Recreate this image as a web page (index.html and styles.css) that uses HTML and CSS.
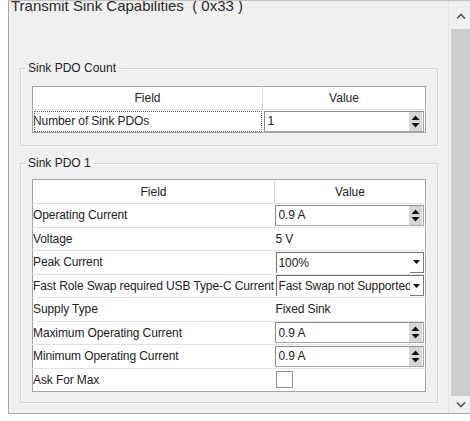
FILE: index.html
```html
<!DOCTYPE html>
<html>
<head>
<meta charset="utf-8">
<link rel="stylesheet" href="styles.css">
</head>
<body>
<div class="frame">
  <div class="viewport">
    <div class="title">Transmit Sink Capabilities&nbsp; ( 0x33 )</div>

    <fieldset class="group g1">
      <legend>Sink PDO Count</legend>
      <table class="grid t1">
        <colgroup><col class="c1a"><col></colgroup>
        <tr><th class="hf">Field</th><th>Value</th></tr>
        <tr>
          <td class="focus">Number of Sink PDOs</td>
          <td class="val"><div class="spin"><span class="txt">1</span><span class="spinbtn"><svg width="9" height="15" viewBox="0 0 9 15"><polygon points="0.5,6 8.5,6 4.5,1.5" fill="#111"/><polygon points="0.5,9 8.5,9 4.5,13.5" fill="#111"/></svg></span></div></td>
        </tr>
      </table>
    </fieldset>

    <fieldset class="group g2">
      <legend>Sink PDO 1</legend>
      <table class="grid t2">
        <colgroup><col class="c2a"><col></colgroup>
        <tr><th class="hf">Field</th><th>Value</th></tr>
        <tr>
          <td>Operating Current</td>
          <td class="val"><div class="spin"><span class="txt">0.9 A</span><span class="spinbtn"><svg width="9" height="15" viewBox="0 0 9 15"><polygon points="0.5,6 8.5,6 4.5,1.5" fill="#111"/><polygon points="0.5,9 8.5,9 4.5,13.5" fill="#111"/></svg></span></div></td>
        </tr>
        <tr>
          <td>Voltage</td>
          <td class="val plain">5 V</td>
        </tr>
        <tr>
          <td>Peak Current</td>
          <td class="val"><div class="combo"><span class="txt">100%</span><span class="dropbtn"><svg width="7" height="4" viewBox="0 0 7 4"><polygon points="0,0 7,0 3.5,4" fill="#111"/></svg></span></div></td>
        </tr>
        <tr>
          <td class="over">Fast Role Swap required USB Type-C Current</td>
          <td class="val"><div class="combo"><span class="txt">Fast Swap not Supported</span><span class="dropbtn"><svg width="7" height="4" viewBox="0 0 7 4"><polygon points="0,0 7,0 3.5,4" fill="#111"/></svg></span></div></td>
        </tr>
        <tr>
          <td>Supply Type</td>
          <td class="val plain">Fixed Sink</td>
        </tr>
        <tr>
          <td>Maximum Operating Current</td>
          <td class="val"><div class="spin"><span class="txt">0.9 A</span><span class="spinbtn"><svg width="9" height="15" viewBox="0 0 9 15"><polygon points="0.5,6 8.5,6 4.5,1.5" fill="#111"/><polygon points="0.5,9 8.5,9 4.5,13.5" fill="#111"/></svg></span></div></td>
        </tr>
        <tr>
          <td>Minimum Operating Current</td>
          <td class="val"><div class="spin"><span class="txt">0.9 A</span><span class="spinbtn"><svg width="9" height="15" viewBox="0 0 9 15"><polygon points="0.5,6 8.5,6 4.5,1.5" fill="#111"/><polygon points="0.5,9 8.5,9 4.5,13.5" fill="#111"/></svg></span></div></td>
        </tr>
        <tr>
          <td>Ask For Max</td>
          <td class="val"><div class="check"></div></td>
        </tr>
      </table>
    </fieldset>
  </div>
  <div class="scrollbar">
    <div class="arrow up"><svg width="10" height="6" viewBox="0 0 10 6"><polyline points="1,5.5 5,1.5 9,5.5" fill="none" stroke="#555" stroke-width="1.6"/></svg></div>
    <div class="thumb"></div>
    <div class="arrow down"><svg width="10" height="6" viewBox="0 0 10 6"><polyline points="1,0.5 5,4.5 9,0.5" fill="none" stroke="#555" stroke-width="1.6"/></svg></div>
  </div>
</div>
</body>
</html>
```

FILE: styles.css
```css
* { box-sizing: border-box; }
html, body { margin: 0; padding: 0; background: #ffffff; }
body {
  font-family: "Liberation Sans", Arial, sans-serif;
  font-size: 12px;
  color: #222;
}
.frame {
  margin-left: 8px;
  width: 462px;
  height: 414px;
  border-left: 1px solid #a8a8a8;
  border-top: 1px solid #c4c4c4;
  border-bottom: 1px solid #a8a8a8;
  background: #f0f0f0;
  display: flex;
}
.viewport {
  width: 440px;
  overflow: hidden;
  border-right: 1px solid #e4e4e4;
}
.title {
  font-size: 15px;
  line-height: 18px;
  margin-top: -4px;
  padding-left: 2px;
  color: #2a2a2a;
  white-space: nowrap;
}
.group {
  margin: 0 10px 0 11px;
  padding: 11px 11px 12px 11px;
  border: 1px solid #d6d6d6;
  box-shadow: inset 1px 1px 0 #fafafa, 1px 1px 0 #fafafa;
  min-width: 0;
}
.g1 { margin-top: 46px; }
.g2 { margin-top: 10px; padding-top: 9px; padding-bottom: 10px; }
.group legend {
  padding: 0 2px;
  margin-left: -6px;
  line-height: 14px;
  font-size: 12px;
  color: #222;
}
.grid {
  width: 100%;
  table-layout: fixed;
  border-collapse: collapse;
  border: 1px solid #a3a3a3;
  background: #fff;
}
.c1a { width: 230px; }
.c2a { width: 242px; }
.grid th {
  font-weight: normal;
  text-align: center;
  height: 23px;
  padding: 0;
  color: #222;
}
.t2 th { height: 24px; }
.grid th.hf { border-right: 1px solid #d9d9d9; }
.grid td {
  height: 23.5px;
  padding: 0;
  border-top: 1px solid #e2e2e2;
  white-space: nowrap;
  overflow: hidden;
  vertical-align: middle;
  letter-spacing: -0.1px;
}
.t1 td { height: 23px; }
.grid td.over { overflow: visible; }
.grid td.focus {
  outline: 1px dotted #666;
  outline-offset: -2px;
}
.grid td.val { padding: 0 1px 0 0; }
.t1 td.val { padding: 0 1px 0 1px; }
.grid td.plain { padding-left: 1px; }
.spin {
  height: 21px;
  display: flex;
  align-items: center;
  border: 1px solid #a6a6a6;
  border-top-color: #8c8c8c;
  border-left-color: #8c8c8c;
  background: #fff;
  padding-left: 3px;
}
.txt { flex: 1; overflow: hidden; white-space: nowrap; }
.spinbtn {
  width: 13px;
  height: 19px;
  background: #d6d6d6;
  display: flex;
  align-items: center;
  justify-content: center;
  margin-right: 1px;
}
.combo {
  height: 21px;
  margin-left: 1px;
  display: flex;
  align-items: center;
  border: 1px solid #9a9a9a;
  border-top-color: #6f6f6f;
  border-left-color: #6f6f6f;
  border-right: none;
  border-bottom: none;
  padding-left: 2px;
  background: #fff;
}
.dropbtn {
  width: 14px;
  height: 20px;
  display: flex;
  align-items: center;
  justify-content: center;
  border-right: 1px solid #7a7a7a;
  border-bottom: 1px solid #7a7a7a;
}
.check {
  width: 17px;
  height: 17px;
  margin-left: 1px;
  border: 1px solid #8f8f8f;
  background: #fff;
}
.scrollbar {
  width: 21px;
  display: flex;
  flex-direction: column;
  align-items: flex-end;
}
.arrow {
  width: 19px;
  display: flex;
  align-items: center;
  justify-content: center;
}
.arrow.up { height: 28px; padding-top: 2px; }
.arrow.down { height: 17px; }
.thumb {
  flex: 1;
  width: 19px;
  background: #cdcdcd;
}
```
